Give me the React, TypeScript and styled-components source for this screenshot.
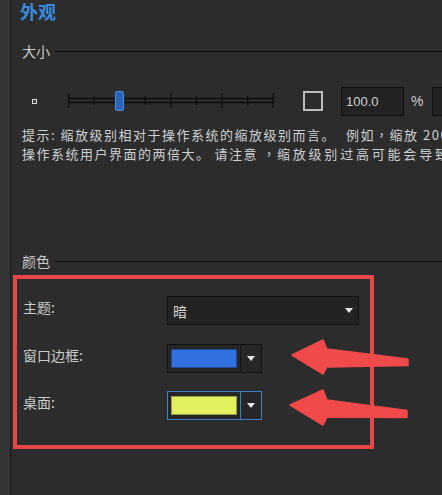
import React from "react";
import styled, { createGlobalStyle } from "styled-components";

const Global = createGlobalStyle`
  html, body { margin: 0; padding: 0; background: #2c2c2c; }
  body { font-family: "Noto Sans CJK SC", "Liberation Sans", sans-serif; }
  * { box-sizing: border-box; }
`;

const Page = styled.div`
  position: relative;
  display: flex;
  width: 442px;
  height: 495px;
  overflow: hidden;
  background: #2c2c2c;
`;

const SideStrip = styled.div`
  width: 11px;
  flex: none;
  background: #353535;
  border-right: 1px solid #1a1a1a;
`;

const Main = styled.div`
  flex: 1;
  min-width: 0;
  padding-left: 11px;
  display: flex;
  flex-direction: column;
  overflow: hidden;
`;

const Title = styled.div`
  line-height: 23px;
  margin-left: -2px;
  font-size: 18px;
  font-weight: 700;
  color: #3a8be0;
`;

const Section = styled.div<{ $top: number }>`
  display: flex;
  align-items: center;
  gap: 5px;
  height: 20px;
  margin-top: ${(p) => p.$top}px;
  font-size: 14px;
  color: #c9c9c9;
`;

const SectionLine = styled.div`
  flex: 1;
  height: 1px;
  background: #0d0d0d;
  margin-top: 1px;
`;

const SliderRow = styled.div`
  display: flex;
  align-items: center;
  height: 30px;
  margin-top: 25px;
  white-space: nowrap;
`;

const MiniSquare = styled.div`
  width: 5px;
  height: 5px;
  margin-left: 10px;
  border: 1px solid #d8d8d8;
  background: #3a3a3a;
  flex: none;
`;

const Track = styled.svg`
  margin-left: 31px;
  flex: none;
  display: block;
`;

const Check = styled.div`
  width: 20px;
  height: 20px;
  margin-left: 28px;
  border: 2px solid #bdbdbd;
  flex: none;
`;

const NumBox = styled.div<{ $w: number; $ml: number }>`
  width: ${(p) => p.$w}px;
  height: 29px;
  margin-left: ${(p) => p.$ml}px;
  flex: none;
  background: #222222;
  border: 1px solid #0f0f0f;
  padding-left: 4px;
  font-family: "Liberation Sans", Arial, sans-serif;
  font-size: 13px;
  line-height: 27px;
  color: #d2d2d2;
`;

const Unit = styled.span`
  margin-left: 7px;
  font-family: "Liberation Sans", Arial, sans-serif;
  font-size: 14px;
  color: #cfcfcf;
  flex: none;
`;

const Hint = styled.div`
  margin-top: 9px;
  font-size: 13px;
  line-height: 19px;
  color: #cdd0d3;
  white-space: nowrap;
`;

const HintLine = styled.div<{ $spacing: number }>`
  letter-spacing: ${(p) => p.$spacing}px;
`;

const Stretch = styled.span<{ $spacing: number }>`
  letter-spacing: ${(p) => p.$spacing}px;
`;

const CenteredPunct = styled.span`
  font-family: "Noto Sans CJK TC", "Noto Sans CJK SC", sans-serif;
`;

const Spacer = styled.span<{ $w: number }>`
  display: inline-block;
  width: ${(p) => p.$w}px;
`;

const HighlightBox = styled.div`
  margin-top: 4px;
  margin-left: -9px;
  width: 361px;
  border: 4px solid #e8474a;
  padding: 17px 0 25px 6px;
  display: grid;
  grid-template-columns: 144px auto;
  row-gap: 18.5px;
  align-items: start;
`;

const Label = styled.div`
  font-size: 14px;
  line-height: 20px;
  padding-top: 1px;
  color: #cacaca;
`;

const Select = styled.div`
  width: 192px;
  height: 29px;
  display: flex;
  align-items: center;
  justify-content: space-between;
  padding: 0 5px 0 5px;
  background: #232323;
  border: 1px solid #111111;
  font-size: 14px;
  color: #d6d6d6;
`;

const Caret = styled.span`
  width: 0;
  height: 0;
  border-left: 4px solid transparent;
  border-right: 4px solid transparent;
  border-top: 5px solid #e6e6e6;
  flex: none;
`;

const ColorSelect = styled.div<{ $focused?: boolean }>`
  width: 95px;
  height: 29px;
  display: flex;
  align-items: stretch;
  background: #262626;
  border: 1px solid ${(p) => (p.$focused ? "#3d80c8" : "#111111")};
`;

const SwatchCell = styled.div`
  width: 72px;
  padding: 4px 3px 4px 3px;
  display: flex;
`;

const Swatch = styled.div<{ $c: string }>`
  flex: 1;
  background: ${(p) => p.$c};
  border: 1px solid rgba(0, 0, 0, 0.35);
`;

const CaretCell = styled.div<{ $focused?: boolean }>`
  flex: 1;
  display: flex;
  align-items: center;
  justify-content: center;
  border-left: 1px solid ${(p) => (p.$focused ? "#3d80c8" : "#141414")};
`;

const Annotation = styled.svg`
  position: absolute;
  left: 0;
  top: 0;
  pointer-events: none;
`;

function SliderTrack() {
  const ticks = Array.from({ length: 9 }, (_, i) => 0.5 + i * 25.6);
  return (
    <Track width="207" height="22" viewBox="0 0 207 22">
      <line x1="0" y1="8.5" x2="206" y2="8.5" stroke="#0c0c0c" strokeWidth="1.3" />
      <line x1="0" y1="12.5" x2="206" y2="12.5" stroke="#0c0c0c" strokeWidth="1.3" />
      {ticks.map((x, i) => (
        <line
          key={i}
          x1={x}
          x2={x}
          y1={i % 2 === 0 ? 3 : 6}
          y2={i % 2 === 0 ? 18 : 15}
          stroke="#0c0c0c"
          strokeWidth="1.3"
        />
      ))}
      <rect x="47.5" y="1.5" width="8" height="19" rx="1" fill="#2b63bb" stroke="#4a8ee6" strokeWidth="1" />
    </Track>
  );
}

export default function App() {
  return (
    <Page>
      <Global />
      <SideStrip />
      <Main>
        <Title>外观</Title>
        <Section $top={18}>
          <span>大小</span>
          <SectionLine />
        </Section>
        <SliderRow>
          <MiniSquare />
          <SliderTrack />
          <Check />
          <NumBox $w={63} $ml={18}>100.0</NumBox>
          <Unit>%</Unit>
          <NumBox $w={40} $ml={9} />
        </SliderRow>
        <Hint>
          <HintLine $spacing={1.5}>
            提示: 缩放级别相对于操作系统的缩放级别而言。<Spacer $w={10} />例如
            <CenteredPunct>，</CenteredPunct>缩放 200% 会使界面是
          </HintLine>
          <HintLine $spacing={1.5}>
            操作系统用户界面的两倍大。<Spacer $w={4} />请注意 <CenteredPunct>，</CenteredPunct>
            <Stretch $spacing={2.8}>缩放级别过高可能会导致界面</Stretch>
          </HintLine>
        </Hint>
        <Section $top={88}>
          <span>颜色</span>
          <SectionLine />
        </Section>
        <HighlightBox>
          <Label>主题:</Label>
          <Select>
            <span>暗</span>
            <Caret />
          </Select>
          <Label>窗口边框:</Label>
          <ColorSelect>
            <SwatchCell>
              <Swatch $c="#3171e0" />
            </SwatchCell>
            <CaretCell>
              <Caret />
            </CaretCell>
          </ColorSelect>
          <Label>桌面:</Label>
          <ColorSelect $focused>
            <SwatchCell>
              <Swatch $c="#e2f060" />
            </SwatchCell>
            <CaretCell $focused>
              <Caret />
            </CaretCell>
          </ColorSelect>
        </HighlightBox>
      </Main>
      <Annotation width="442" height="495" viewBox="0 0 442 495">
        <polygon
          points="292,355 323,340 327,349 408,359 408,365.5 327,367 323,374"
          fill="#f04a4a"
          strokeLinejoin="round"
          stroke="#f04a4a"
          strokeWidth="1.5"
        />
        <polygon
          points="290,405 323,390 327,400 407,410.5 407,417.5 327,417 323,425"
          fill="#f04a4a"
          strokeLinejoin="round"
          stroke="#f04a4a"
          strokeWidth="1.5"
        />
      </Annotation>
    </Page>
  );
}
